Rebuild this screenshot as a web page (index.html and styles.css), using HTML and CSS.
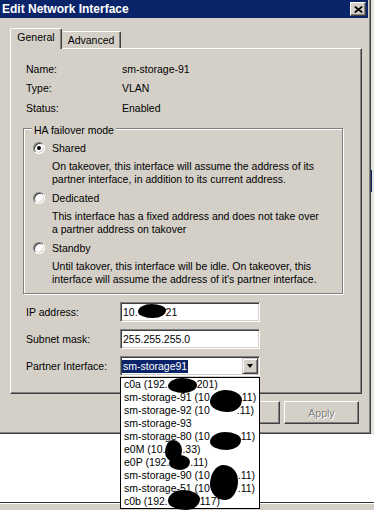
FILE: index.html
```html
<!DOCTYPE html>
<html>
<head>
<meta charset="utf-8">
<title>Edit Network Interface</title>
<link rel="stylesheet" href="styles.css">
</head>
<body>
<div class="screen">
  <div class="top">
    <div class="dialog">
      <div class="titlebar">
        <span class="title">Edit Network Interface</span>
        <span class="close"><svg width="9" height="7" viewBox="0 0 9 7"><path d="M0.8 0.5 L8.2 6.5 M8.2 0.5 L0.8 6.5" stroke="#000" stroke-width="1.7" fill="none"/></svg></span>
      </div>
      <div class="tabs">
        <div class="tab active">General</div>
        <div class="tab">Advanced</div>
      </div>
      <div class="panel">
        <div class="info">
          <span>Name:</span><span>sm-storage-91</span>
          <span>Type:</span><span>VLAN</span>
          <span>Status:</span><span>Enabled</span>
        </div>
        <div class="group">
          <div class="group-title">HA failover mode</div>
          <div class="opt">
            <div class="radio-row"><span class="radio on"></span><span>Shared</span></div>
            <div class="desc">On takeover, this interface will assume the address of its<br>partner interface, in addition to its current address.</div>
          </div>
          <div class="opt">
            <div class="radio-row"><span class="radio"></span><span>Dedicated</span></div>
            <div class="desc">This interface has a fixed address and does not take over<br>a partner address on takover</div>
          </div>
          <div class="opt">
            <div class="radio-row"><span class="radio"></span><span>Standby</span></div>
            <div class="desc">Until takover, this interface will be idle. On takeover, this<br>interface will assume the address of it's partner interface.</div>
          </div>
        </div>
        <div class="fields">
          <span>IP address:</span>
          <div class="field">10.<span class="blob b-ip"></span>21</div>
          <span>Subnet mask:</span>
          <div class="field">255.255.255.0</div>
          <span>Partner Interface:</span>
          <div class="field combo"><span class="sel">sm-storage91</span><span class="drop"><span class="arrow"></span></span></div>
        </div>
      </div>
      <div class="buttons">
        <button class="btn">OK</button>
        <button class="btn">Cancel</button>
        <button class="btn disabled">Apply</button>
      </div>
    </div>
    <div class="side"><div class="blip"></div></div>
  </div>
  <div class="desk"></div>
  <div class="taskbar"></div>
  <ul class="droplist">
    <li>c0a (192.<span class="blob b1"></span>201)</li>
    <li>sm-storage-91 (10<span class="blob b2"></span>11)</li>
    <li>sm-storage-92 (10<span class="gap g3"></span>.11)</li>
    <li>sm-storage-93</li>
    <li>sm-storage-80 (10<span class="blob b5"></span>11)</li>
    <li>e0M (10.<span class="blob b6"></span>.33)</li>
    <li>e0P (192.<span class="blob b7"></span>.11)</li>
    <li>sm-storage-90 (10<span class="blob b8"></span>.11)</li>
    <li>sm-storage-51 (10<span class="gap g9"></span>.11)</li>
    <li>c0b (192.<span class="blob b10"></span>117)</li>
  </ul>
</div>
</body>
</html>
```
FILE: styles.css
```css
html, body {
  margin: 0;
  padding: 0;
  background: #fff;
}

.screen {
  position: relative;
  width: 374px;
  height: 510px;
  overflow: hidden;
  font-family: "Liberation Sans", Arial, sans-serif;
  font-size: 10.5px;
  line-height: 13px;
  color: #000;
}

.top {
  display: flex;
  height: 434px;
}

.dialog {
  width: 371px;
  height: 434px;
  box-sizing: border-box;
  background: #d4d0c8;
  border-right: 1px solid #404040;
  border-bottom: 1px solid #404040;
  box-shadow: inset -1px -1px #808080;
  padding-right: 2px;
}

.side {
  flex: 1;
  background: #e6e4e0;
}

.blip {
  width: 1px;
  height: 22px;
  margin-top: 170px;
  background: #0a246a;
}

.titlebar {
  height: 18px;
  background: #0a246a;
  display: flex;
  align-items: center;
  justify-content: space-between;
  padding: 0 2px;
}

.title {
  color: #fff;
  font-weight: bold;
  font-size: 12px;
  line-height: 18px;
}

.close {
  width: 16px;
  height: 14px;
  box-sizing: border-box;
  background: #d4d0c8;
  border: 1px solid;
  border-color: #fff #404040 #404040 #fff;
  box-shadow: inset -1px -1px #808080;
  display: flex;
  align-items: center;
  justify-content: center;
}

.close svg {
  display: block;
}

.tabs {
  display: flex;
  align-items: flex-end;
  height: 20px;
  margin-top: 10px;
  padding-left: 10px;
}

.tab {
  box-sizing: border-box;
  text-align: center;
  background: #d4d0c8;
  border-top: 1px solid #fff;
  border-right: 1px solid #404040;
  box-shadow: inset -1px 0 #808080;
  border-radius: 2px 2px 0 0;
  padding-top: 2px;
  width: 59px;
  height: 17px;
}

.tab.active {
  position: relative;
  z-index: 1;
  width: 52px;
  height: 21px;
  margin-bottom: -1px;
  border-left: 1px solid #fff;
}

.panel {
  width: 352px;
  height: 346px;
  margin-left: 10px;
  box-sizing: border-box;
  border-top: 1px solid #fff;
  border-left: 1px solid #fff;
  border-right: 1px solid #404040;
  border-bottom: 1px solid #404040;
  box-shadow: inset -1px -1px #808080;
  padding-left: 12px;
}

.info {
  display: grid;
  grid-template-columns: 96px auto;
  row-gap: 6.5px;
  padding: 13.5px 0 0 3px;
}

.group {
  width: 320px;
  box-sizing: border-box;
  margin-top: 13.5px;
  border: 1px solid #808080;
  box-shadow: inset 1px 1px #fff, 1px 1px #fff;
  padding: 0 0 7.5px 9px;
}

.group-title {
  width: fit-content;
  margin: -5.5px 0 0 -1px;
  padding: 0 2px;
  background: #d4d0c8;
}

.opt {
  margin-top: 6px;
}

.group-title + .opt {
  margin-top: 5px;
}

.radio-row {
  display: flex;
  align-items: center;
  gap: 7px;
  height: 13px;
}

.radio {
  width: 12px;
  height: 12px;
  box-sizing: border-box;
  border-radius: 50%;
  background: #fff;
  border: 1px solid;
  border-color: #808080 #fff #fff #808080;
  box-shadow: inset 1px 1px #404040, inset -1px -1px #d4d0c8;
  display: flex;
  align-items: center;
  justify-content: center;
}

.radio.on::after {
  content: "";
  width: 4px;
  height: 4px;
  border-radius: 50%;
  background: #000;
}

.desc {
  margin-top: 5px;
  padding-left: 19px;
  white-space: nowrap;
}

.fields {
  display: grid;
  grid-template-columns: 94px 140px;
  grid-auto-rows: 20px;
  row-gap: 7px;
  align-items: center;
  margin-top: 8px;
  padding-left: 3px;
}

.field {
  height: 20px;
  box-sizing: border-box;
  background: #fff;
  border: 1px solid;
  border-color: #808080 #fff #fff #808080;
  box-shadow: inset 1px 1px #404040, inset -1px -1px #d4d0c8;
  padding-left: 2px;
  display: flex;
  align-items: center;
  white-space: nowrap;
}

.combo {
  padding: 1px;
  justify-content: space-between;
}

.sel {
  background: #0a246a;
  color: #fff;
  line-height: 13px;
  padding: 0 1px;
}

.drop {
  width: 16px;
  height: 16px;
  box-sizing: border-box;
  background: #d4d0c8;
  border: 1px solid;
  border-color: #d4d0c8 #404040 #404040 #d4d0c8;
  box-shadow: inset 1px 1px #fff, inset -1px -1px #808080;
  display: flex;
  align-items: center;
  justify-content: center;
}

.arrow {
  width: 0;
  height: 0;
  border-left: 3.5px solid transparent;
  border-right: 3.5px solid transparent;
  border-top: 4px solid #000;
}

.buttons {
  display: flex;
  justify-content: flex-end;
  gap: 4px;
  margin-top: 7px;
  padding-right: 9px;
}

.btn {
  width: 75px;
  height: 23px;
  box-sizing: border-box;
  margin: 0;
  padding: 0;
  background: #d4d0c8;
  border: 1px solid;
  border-color: #fff #404040 #404040 #fff;
  box-shadow: inset -1px -1px #808080;
  font-family: inherit;
  font-size: 10.5px;
  color: #000;
}

.btn.disabled {
  color: #808080;
  text-shadow: 1px 1px #fff;
}

.desk {
  height: 68px;
  background: #fff;
}

.taskbar {
  height: 8px;
  background: #d4d0c8;
  border-top: 1px solid #303030;
  box-shadow: inset 0 1px #fff;
}

.droplist {
  position: absolute;
  left: 120px;
  top: 377px;
  width: 140px;
  box-sizing: border-box;
  margin: 0;
  padding: 0;
  list-style: none;
  background: #fff;
  border: 1px solid #000;
}

.droplist li {
  height: 13px;
  line-height: 13px;
  padding-left: 3px;
  white-space: nowrap;
}

.blob {
  display: inline-block;
  vertical-align: middle;
  background: #000;
  border-radius: 48% 52% 45% 55% / 55% 45% 55% 45%;
}

.gap {
  display: inline-block;
}

.b-ip { width: 28px; height: 14px; margin: -8px 0 -6px; }
.b1 { width: 29px; height: 15px; margin: -7px 0 -8px; }
.b2 { width: 32px; height: 22px; margin: -8px 0 -14px; }
.g3 { width: 27px; }
.b5 { width: 31px; height: 18px; margin: -5px 0 -13px; }
.b6 { width: 17px; height: 22px; margin: -10px 0 -12px; }
.b7 { width: 21px; height: 15px; margin: -8px 0 -7px; }
.b8 { width: 28px; height: 35px; margin: -11px 0 -24px; }
.g9 { width: 28px; }
.b10 { width: 32px; height: 20px; margin: -12px 0 -8px; }
```
